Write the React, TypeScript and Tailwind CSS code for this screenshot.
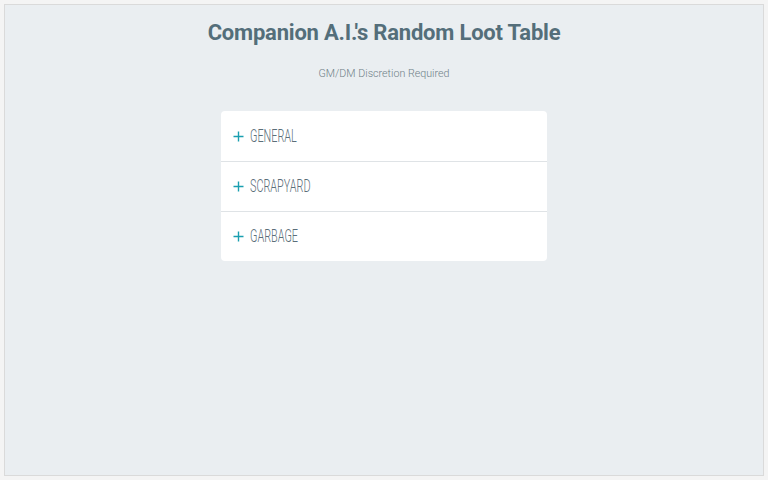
import { useState } from 'react'

const sections = ['GENERAL', 'SCRAPYARD', 'GARBAGE']

export default function App() {
  const [open, setOpen] = useState<string | null>(null)

  return (
    <div className="h-[480px] w-[768px] bg-[#f4f4f4] p-1">
      <div className="h-[472px] border border-[#dadada] bg-[#eaeef1] flex flex-col items-center" style={{ fontFamily: 'Roboto, sans-serif' }}>
        <h1 className="mt-[12px] text-[22px] leading-[32px] font-bold text-[#546e7a] tracking-[-0.2px]">
          Companion A.I.'s Random Loot Table
        </h1>
        <p className="mt-[18px] text-[10.7px] leading-[14px] font-light text-[#6f7f88]">GM/DM Discretion Required</p>
        <div className="mt-[30px] w-[326px] bg-white rounded-[4px] overflow-hidden">
          {sections.map((s, i) => (
            <button
              key={s}
              onClick={() => setOpen(open === s ? null : s)}
              className={`w-full h-[50px] flex items-center pl-[12px] text-left ${i > 0 ? 'border-t border-[#dfe3e6]' : ''}`}
            >
              <svg width="11" height="11" viewBox="0 0 11 11" className="mr-[6px] shrink-0">
                <path d="M5.5 0.5v10M0.5 5.5h10" stroke="#1a9fb0" strokeWidth="1.4" fill="none" />
              </svg>
              <span className="inline-block origin-left scale-x-[0.57] text-[19px] font-light text-[#5b6e79] whitespace-nowrap">
                {s}
              </span>
            </button>
          ))}
        </div>
      </div>
    </div>
  )
}
